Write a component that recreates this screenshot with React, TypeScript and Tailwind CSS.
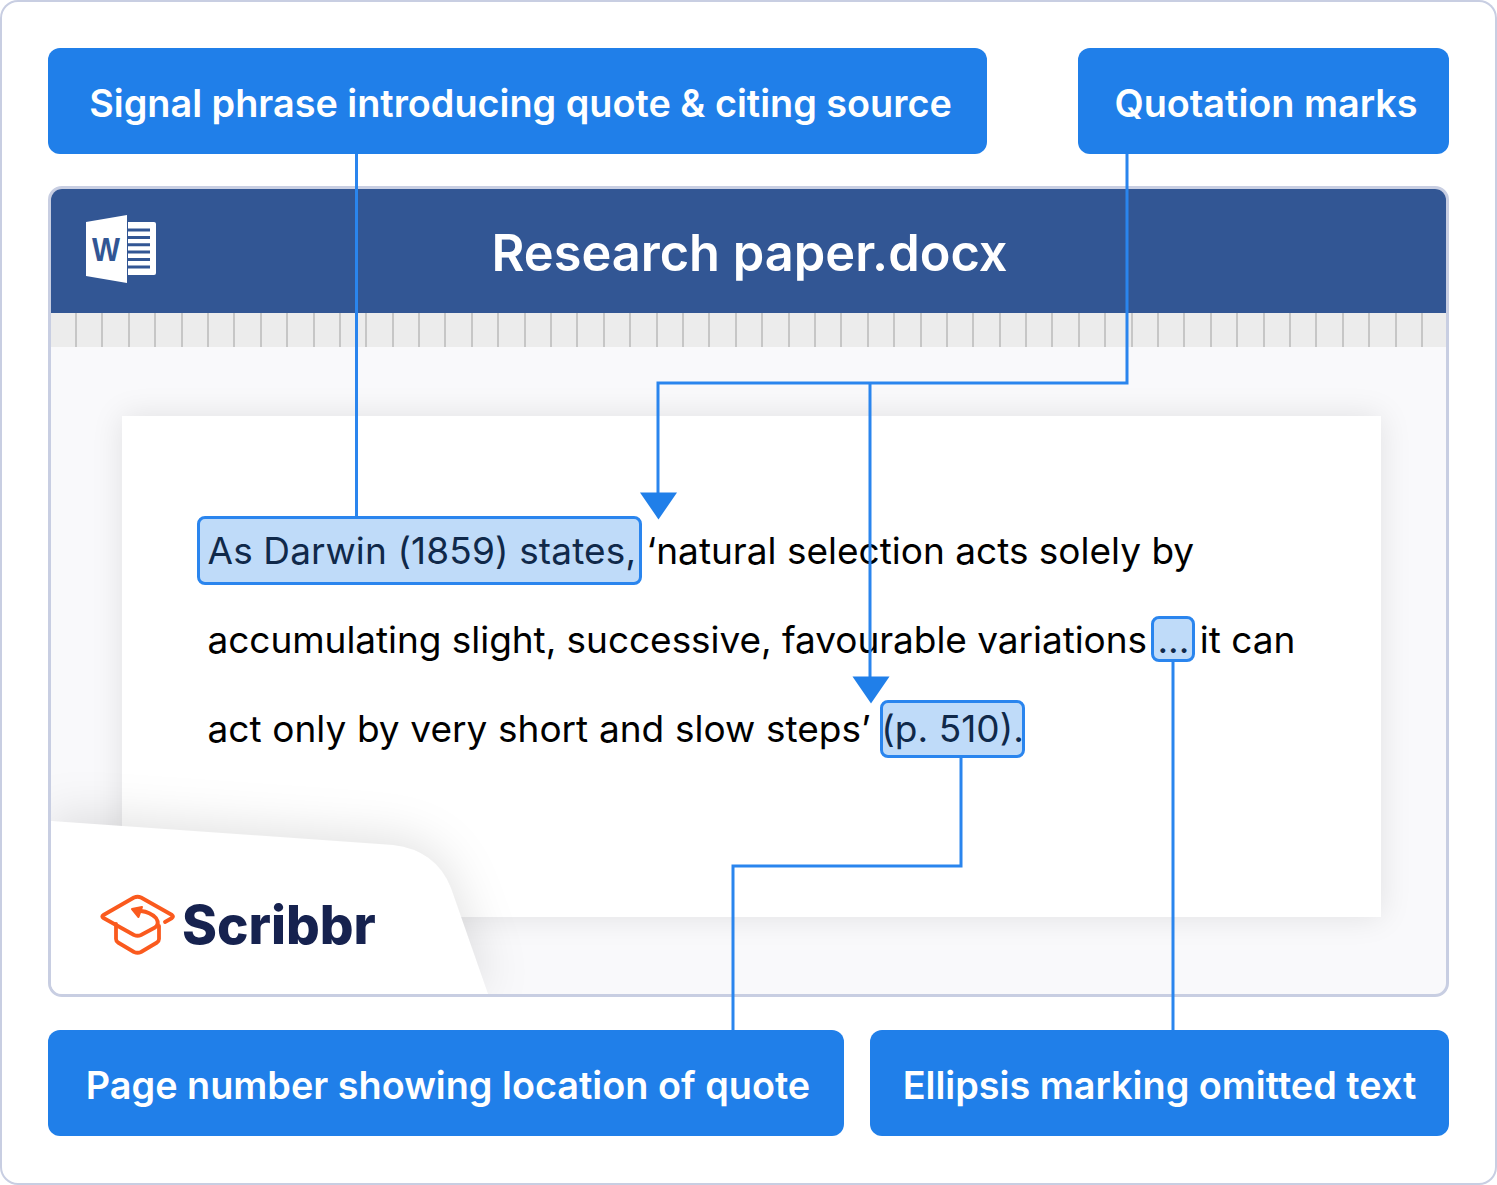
import React from 'react';

const font = { body: 'font-["Inter",sans-serif]' };

const Label = ({ text, className }: { text: string; className: string }) => (
  <div className={`h-[106px] rounded-xl bg-[#207fe9] flex items-center justify-center pt-[4px] text-white font-semibold text-[37.8px] ${className}`}>
    {text}
  </div>
);

// box sits behind the text and does not take part in the line's width
const Mark = ({ children, box }: { children: React.ReactNode; box: string }) => (
  <span className="relative">
    <span className={`absolute bg-[#bfdbf9] border-[3px] border-[#2a85ee] rounded-lg ${box}`} />
    <span className="relative text-[#10294a]">{children}</span>
  </span>
);

const WordIcon = () => (
  <svg width="72" height="70" viewBox="85 214 72 70">
    <path d="M86 222 L127 215 V283 L86 276 Z" fill="#fff" />
    <path d="M128 222 H154 Q156 222 156 224 V273 Q156 275 154 275 H128 Z" fill="#fff" />
    <path d="M128 230 H150 M128 237.4 H150 M128 244.8 H150 M128 252 H150 M128 259.4 H150 M128 267 H150" stroke="#325694" strokeWidth="3" />
    <text x="92" y="261" textLength="28" lengthAdjust="spacingAndGlyphs" fontFamily="Liberation Sans, sans-serif" fontWeight="700" fontSize="34" fill="#325694">W</text>
  </svg>
);

const CapLogo = () => (
  <svg width="78" height="66" viewBox="99 892 78 66" fill="none" stroke="#fa5a1e" strokeWidth="3.8" strokeLinecap="round" strokeLinejoin="round">
    <path d="M165 922 L172 918 Q174 916.5 172 915 L141 897.5 Q137.7 896 134 897.5 L103.5 915 Q101 916.5 103.5 918 L134 935 Q137.7 936.5 141 935 L155 927.5 Q160 924 156 918 Q150 912 141 911" />
    <path d="M116 924 V939 Q116 941 118 942.5 L134 952 Q137.7 953.5 141 952 L157 942.5 Q159 941 159 939 V926" />
    <path d="M132 909 L142 907 L138.5 917 Z" fill="#fa5a1e" strokeWidth="2" />
  </svg>
);

export default function App() {
  return (
    <div className={`relative w-[1497px] h-[1185px] p-12 bg-white rounded-[18px] shadow-[inset_0_0_0_2px_#c8cee2] ${font.body}`}>
      <div className="flex justify-between">
        <Label text="Signal phrase introducing quote & citing source" className="w-[939px] pl-[6px]" />
        <Label text="Quotation marks" className="w-[371px] pl-[5px]" />
      </div>

      <div className="relative mt-[32px] h-[811px] rounded-[14px] border-[3px] border-[#c8cee2] bg-[#f9f9fb] overflow-hidden">
        <div className="h-[124px] bg-[#325694] flex items-center justify-center relative">
          <div className="absolute left-[34px] top-[25px] flex"><WordIcon /></div>
          <span className="text-white font-semibold text-[50.5px] pt-[4px] pl-[2px]">Research paper.docx</span>
        </div>
        <div className="h-[34px] bg-[#ececec] flex pl-[24px]">
          {Array.from({ length: 53 }).map((_, i) => (
            <div key={i} className="w-[26.4px] shrink-0 border-l-2 border-[#c6c6c6]" />
          ))}
        </div>
        <div className="ml-[71px] mr-[65px] mt-[69px] h-[501px] bg-white shadow-[0_0_30px_rgba(0,0,0,0.1)] pl-[85.5px] pt-[90px] text-[37px] leading-[89px] text-black whitespace-nowrap">
          <div>
            <Mark box="-left-[10.5px] -right-[6px] -top-[12px] -bottom-[12px]"><span className="tracking-[0.13px]">As Darwin (1859) states,</span></Mark> ‘natural selection acts solely by
          </div>
          <div>
            <span className="tracking-[-0.05px]">accumulating slight, successive, favourable variations</span> <Mark box="-left-[6px] -right-[6px] -top-[1px] bottom-0">...</Mark> it can
          </div>
          <div className="[word-spacing:0.3px]">
            act only by very short and slow steps’ <Mark box="-left-[1px] -right-[1px] -top-[6px] -bottom-[7px]">(p. 510).</Mark>
          </div>
        </div>
        <div className="absolute left-0 bottom-0 w-[440px] h-[176px]">
          <svg className="absolute inset-0 drop-shadow-[0_-6px_24px_rgba(0,0,0,0.12)]" width="440" height="176" viewBox="0 0 440 176">
            <path d="M0 3 L342 27 Q385 32 400 70 L437 176 H0 Z" fill="#fff" />
          </svg>
          <div className="absolute left-[48px] top-[74px] flex items-center gap-[5px]">
            <CapLogo />
            <span className="text-[#16224f] font-extrabold text-[53px] leading-none">Scribbr</span>
          </div>
        </div>
      </div>

      <div className="flex justify-between mt-[33px]">
        <Label text="Page number showing location of quote" className="w-[796px] pl-[4px]" />
        <Label text="Ellipsis marking omitted text" className="w-[579px]" />
      </div>

      <svg className="absolute left-0 top-0 pointer-events-none" width="1497" height="1185" fill="none" stroke="#2a85ee" strokeWidth="3">
        <path d="M356.5 154 V517" />
        <path d="M1127 154 V383 H658 V495" />
        <path d="M870 383 V680" />
        <path d="M961 757 V866 H733 V1030" />
        <path d="M1173 661 V1030" />
        <path d="M640 492.5 H677 L658.5 519.5 Z" fill="#207fe9" stroke="none" />
        <path d="M852.5 676.5 H889.5 L871 703.5 Z" fill="#207fe9" stroke="none" />
      </svg>
    </div>
  );
}
